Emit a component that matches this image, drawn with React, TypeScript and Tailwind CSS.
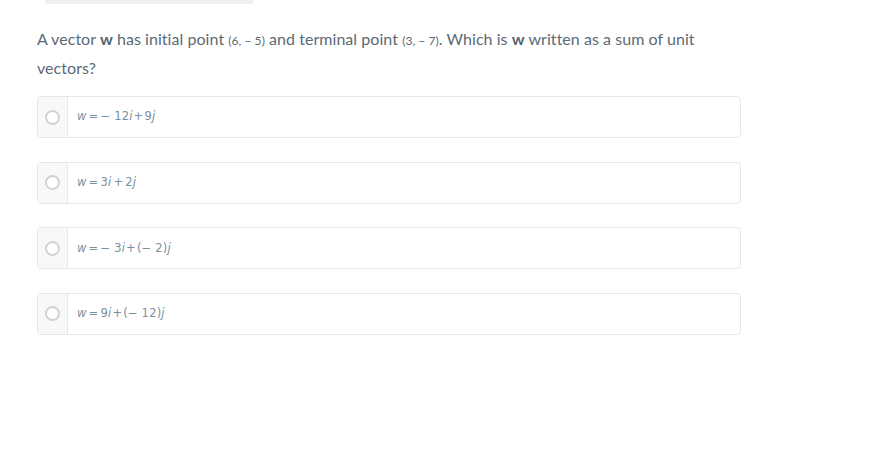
import React from "react";

const I = ({ children }: { children: React.ReactNode }) => (
  <span className="italic">{children}</span>
);

const options: React.ReactNode[] = [
  <>
    <I>w</I>
    <span className="mx-[2px]">=</span>− 12 <I>i</I>
    <span className="mx-[1px]">+</span> 9 <I>j</I>
  </>,
  <>
    <I>w</I>
    <span className="mx-[2px]">=</span>3<I>i</I>
    <span className="mx-[2px]">+</span>2<I>j</I>
  </>,
  <>
    <I>w</I>
    <span className="mx-[2px]">=</span>− 3<I>i</I>
    <span className="mx-[1px]">+</span>(− 2)<I>j</I>
  </>,
  <>
    <I>w</I>
    <span className="mx-[2px]">=</span>9<I>i</I>
    <span className="mx-[1px]">+</span>(− 12)<I>j</I>
  </>,
];

export default function App() {
  return (
    <div
      className="w-[879px] h-[461px] bg-white overflow-hidden"
      style={{ fontFamily: "Lato, 'Open Sans', sans-serif" }}
    >
      <div className="ml-[45px] w-[209px] h-[4px] bg-[#eef0f3] rounded-b-full" />
      <div className="pl-[37px] pr-[138px] pt-[21px]">
        <p className="text-[16px] leading-[27px] text-[#5b6a75] tracking-[0.05px]">
          A vector <b className="font-bold text-[#56636d]">w</b> has initial point{" "}
          <span className="text-[12px]">(6, − 5)</span> and terminal point{" "}
          <span className="text-[12px]">(3, − 7)</span>. Which is{" "}
          <b className="font-bold text-[#56636d]">w</b> written as a sum of unit vectors?
        </p>
        <div className="mt-[15px] flex flex-col gap-[23.6px]">
          {options.map((o, k) => (
            <div
              key={k}
              className="flex h-[42px] border border-[#e6e7e8] rounded-[4px] overflow-hidden bg-white"
            >
              <div className="w-[30px] shrink-0 bg-[#f8f8f8] border-r border-[#e6e7e8] flex items-center justify-center">
                <div className="w-[15px] h-[15px] rounded-full border-2 border-[#cfd3d6] bg-white" />
              </div>
              <div
                className="flex items-center pl-[9px] text-[11.5px] text-[#7890a0] tracking-[0.2px]"
                style={{ fontFamily: "'DejaVu Sans', sans-serif" }}
              >
                {o}
              </div>
            </div>
          ))}
        </div>
      </div>
    </div>
  );
}
